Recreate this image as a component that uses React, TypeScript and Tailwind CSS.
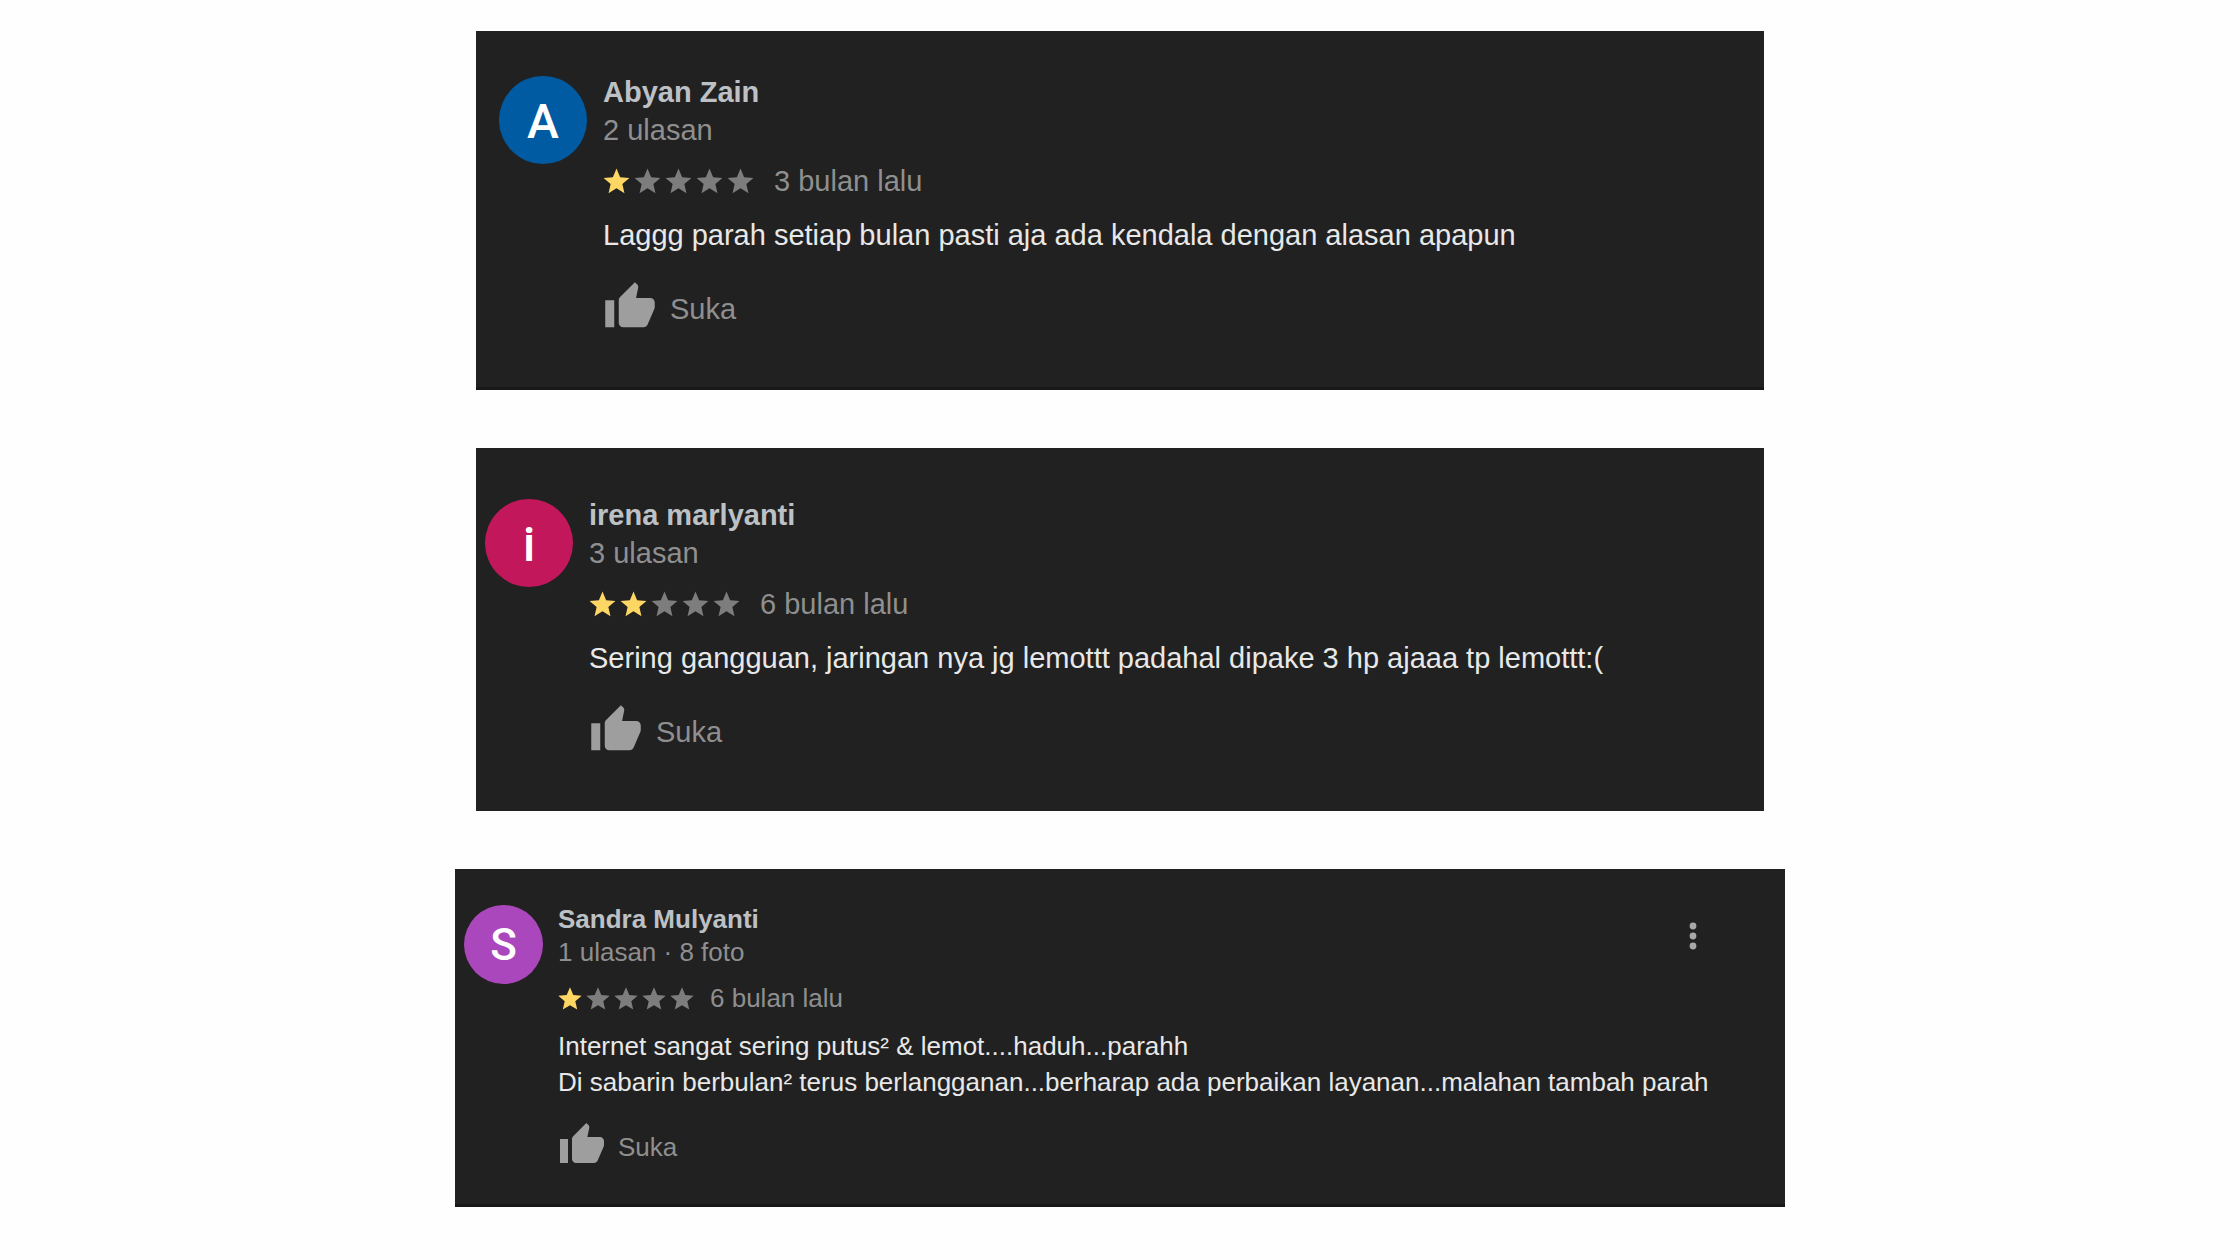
import { clsx } from "clsx";

type Size = "lg" | "md";

interface Review {
    name: string;
    initial: string;
    meta: string;
    rating: number;
    date: string;
    lines: string[];
    size: Size;
    avatarClass: string;
    cardClass: string;
    hasMenu?: boolean;
}

const reviews: Review[] = [
    {
        name: "Abyan Zain",
        initial: "A",
        meta: "2 ulasan",
        rating: 1,
        date: "3 bulan lalu",
        lines: ["Laggg parah setiap bulan pasti aja ada kendala dengan alasan apapun"],
        size: "lg",
        avatarClass: "bg-[#015ba2]",
        cardClass: "max-w-[1288px] pl-[23px] pt-[42px] pb-[53px] border-b-3 border-[#181818]",
    },
    {
        name: "irena marlyanti",
        initial: "i",
        meta: "3 ulasan",
        rating: 2,
        date: "6 bulan lalu",
        lines: ["Sering gangguan, jaringan nya jg lemottt padahal dipake 3 hp ajaaa tp lemottt:("],
        size: "lg",
        avatarClass: "bg-[#c2185b]",
        cardClass: "max-w-[1288px] pl-[9px] pt-[48px] pb-[54px]",
    },
    {
        name: "Sandra Mulyanti",
        initial: "S",
        meta: "1 ulasan · 8 foto",
        rating: 1,
        date: "6 bulan lalu",
        lines: [
            "Internet sangat sering putus² & lemot....haduh...parahh",
            "Di sabarin berbulan² terus berlangganan...berharap ada perbaikan layanan...malahan tambah parah",
        ],
        size: "md",
        avatarClass: "bg-[#ab47bc]",
        cardClass: "max-w-[1330px] pl-[9px] pt-[34px] pb-[35px] border-b-3 border-[#181818]",
        hasMenu: true,
    },
];

const sizes = {
    lg: {
        row: "gap-4 text-[29px]",
        avatar: "mt-[3px] size-[88px] pt-1 text-[48px]",
        line: "leading-[38px]",
        rating: "mt-[13px] gap-[18px]",
        star: "size-[31px]",
        body: "mt-[15px] leading-[40px]",
        like: "mt-[25px] gap-[13px]",
        thumb: "size-[54px]",
    },
    md: {
        row: "gap-[15px] text-[26px]",
        avatar: "mt-[2px] size-[79px] text-[44px]",
        line: "leading-[33px]",
        rating: "mt-[13px] gap-[14px]",
        star: "size-[28px]",
        body: "mt-[13px] leading-[36px]",
        like: "mt-[21px] gap-3",
        thumb: "size-[48px]",
    },
};

function Star({ className }: { className: string }) {
    return (
        <svg viewBox="0 0 24 24" fill="currentColor" aria-hidden="true" className={className}>
            <path d="M12 17.27 18.18 21l-1.64-7.03L22 9.24l-7.19-.61L12 2 9.19 8.63 2 9.24l5.46 4.73L5.82 21z" />
        </svg>
    );
}

function ThumbUp({ className }: { className: string }) {
    return (
        <svg viewBox="0 0 24 24" fill="currentColor" aria-hidden="true" className={className}>
            <path d="M1 21h4V9H1v12zm22-11c0-1.1-.9-2-2-2h-6.31l.95-4.57.03-.32c0-.41-.17-.79-.44-1.06L14.17 1 7.59 7.59C7.22 7.95 7 8.45 7 9v10c0 1.1.9 2 2 2h9c.83 0 1.54-.5 1.84-1.22l3.02-7.05c.09-.23.14-.47.14-.73v-2z" />
        </svg>
    );
}

function ReviewCard({ review }: { review: Review }) {
    const s = sizes[review.size];

    return (
        <article className={clsx("w-full bg-[#212121]", review.cardClass)}>
            <div className={clsx("flex items-start", s.row)}>
                <div
                    className={clsx(
                        "flex shrink-0 items-center justify-center rounded-full font-[Roboto,sans-serif] leading-none font-medium text-white",
                        s.avatar,
                        review.avatarClass
                    )}
                >
                    {review.initial}
                </div>
                <div className="min-w-0 flex-1">
                    <div className="flex items-start justify-between">
                        <div className={s.line}>
                            <h2 className="font-bold text-[#bdc1c6]">{review.name}</h2>
                            <p className="text-[#8f8f8f]">{review.meta}</p>
                        </div>
                        {review.hasMenu && (
                            <button type="button" aria-label="Opsi lainnya" className="mt-3 mr-[71px] p-1 text-[#a8a8a8]">
                                <svg viewBox="0 0 34 34" fill="currentColor" aria-hidden="true" className="size-[34px]">
                                    <circle cx="17" cy="7" r="3.4" />
                                    <circle cx="17" cy="17" r="3.4" />
                                    <circle cx="17" cy="27" r="3.4" />
                                </svg>
                            </button>
                        )}
                    </div>
                    <div className={clsx("flex items-center", s.line, s.rating)}>
                        <div className="-ml-0.5 flex" role="img" aria-label={`${review.rating} dari 5 bintang`}>
                            {[1, 2, 3, 4, 5].map((n) => (
                                <Star key={n} className={clsx(s.star, n <= review.rating ? "text-[#fdd663]" : "text-[#7d7d7d]")} />
                            ))}
                        </div>
                        <span className="text-[#8f8f8f]">{review.date}</span>
                    </div>
                    <div className={clsx("text-[#e8e8e8]", s.body)}>
                        {review.lines.map((line) => (
                            <p key={line}>{line}</p>
                        ))}
                    </div>
                    <button type="button" className={clsx("flex items-center text-[#8f8f8f]", s.like)}>
                        <ThumbUp className={clsx("text-[#9e9e9e]", s.thumb)} />
                        <span className={clsx("pt-1", s.line)}>Suka</span>
                    </button>
                </div>
            </div>
        </article>
    );
}

export default function App() {
    return (
        <main className="flex min-h-screen flex-col items-center gap-[58px] bg-[#fefefe] px-4 pt-[31px] pb-[53px] font-['Liberation_Sans',Arial,sans-serif]">
            {reviews.map((review) => (
                <ReviewCard key={review.name} review={review} />
            ))}
        </main>
    );
}
